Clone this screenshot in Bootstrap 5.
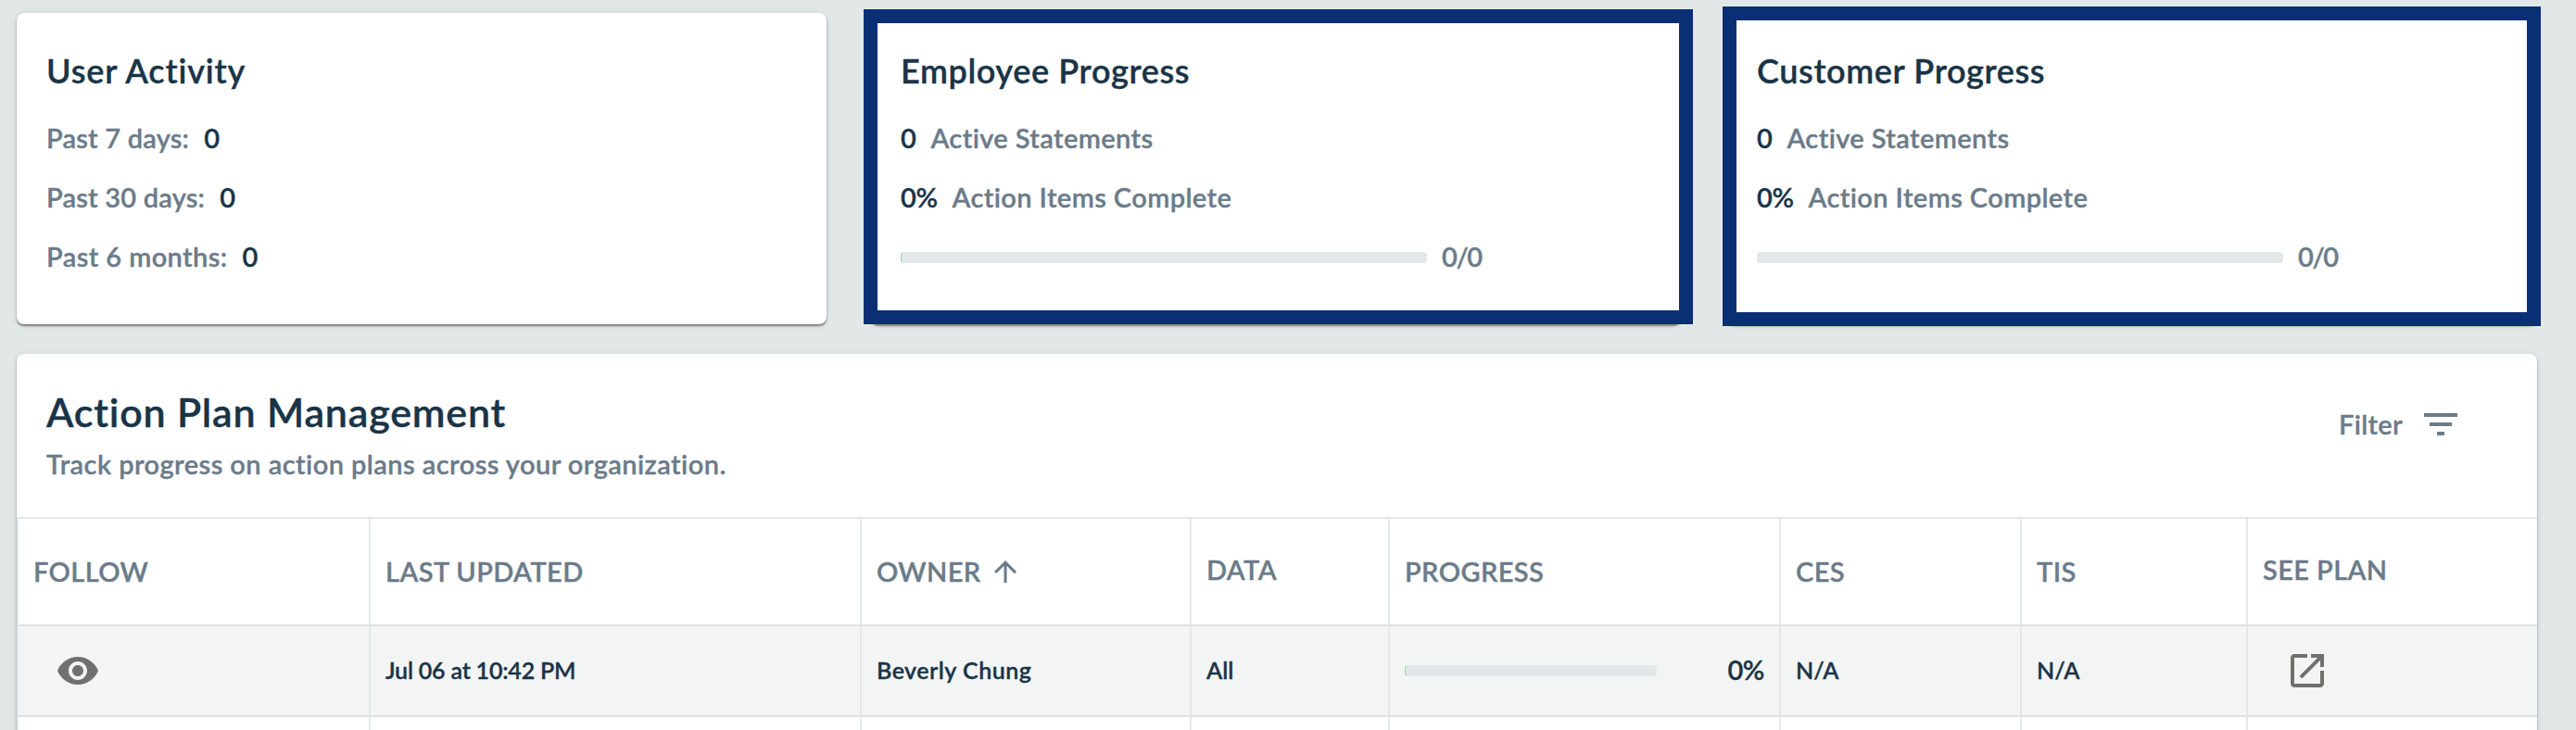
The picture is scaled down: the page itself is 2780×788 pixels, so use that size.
<!DOCTYPE html>
<html lang="en">
<head>
<meta charset="utf-8">
<meta name="viewport" content="width=device-width, initial-scale=1">
<title>Action Plan Management</title>
<link href="https://cdn.jsdelivr.net/npm/bootstrap@5.3.0/dist/css/bootstrap.min.css" rel="stylesheet">
<style>
:root{--ink:#1a3447;--muted:#6b7b89;--line:#e2e8e8}
html,body{height:788px;overflow:hidden}
body{background:#e2e8e8;font-family:Lato,"Liberation Sans",sans-serif;font-weight:600;color:var(--ink);line-height:1.2;-webkit-text-stroke:.35px currentColor}
.dash{height:788px;padding:14px 42px 0 18px;overflow:hidden}
.stats{display:grid;grid-template-columns:repeat(3,874px);column-gap:48px;height:336px}
.panel{background:#fff;border:0;border-radius:8px;box-shadow:0 2px 2px rgba(0,0,0,.42),0 1px 6px rgba(0,0,0,.12)}
.stats .panel{padding:30px 32px 0}
/* selection frames drawn around the two progress cards */
.framed{position:relative}
.framed::after{content:"";position:absolute;border:15px solid #0b2f74}
.frame-emp::after{left:-8px;top:-4px;width:895px;height:340px}
.frame-cus{left:2px}
.frame-cus::after{left:-5px;top:-7px;width:883px;height:345px}
.ttl{font-size:36px;line-height:64px;font-weight:600;letter-spacing:.63px;margin:0 0 9px}
.ttl.wide{letter-spacing:.85px}
.ln{font-size:29px;height:64px;color:var(--muted);letter-spacing:.4px;gap:16px}
.days span{letter-spacing:.2px}
.ln b,.pct{font-weight:600;color:var(--ink);letter-spacing:-.4px}
.ln .tally{letter-spacing:-1.4px}
.track{width:568px;height:12px;border-radius:4px;background:#e2e8e8;position:relative;top:1px;flex:none}
.track.started{border-left:1px solid #9ccf9c}
.mgmt{margin-top:32px;height:420px}
.mhead{height:176px;padding:30px 80px 0 32px}
.h-main{font-size:43px;line-height:66px;font-weight:600;letter-spacing:.8px;margin:0 0 1px}
.sub{font-size:29px;line-height:44px;letter-spacing:.43px;color:var(--muted)}
.filter{font-size:29px;color:var(--muted);gap:17px;height:48px;margin-top:22px}
.filter span{letter-spacing:.3px}
.gridrow{display:grid;grid-template-columns:380px 530px 356px 214px 422px 260px 244px 314px;position:relative}
.gridrow>div{border-left:2px solid var(--line);padding:0 16px;display:flex;align-items:center}
.hrow{height:118px;border-top:2px solid var(--line)}
.hrow>div{font-size:29px;color:var(--muted);letter-spacing:.4px;border-bottom:2px solid #dde1e1}
.hrow>.raise{padding-bottom:4px}
.drow{height:98px;background:#f3f5f4}
.drow>div{font-size:25px;border-bottom:2px solid #dde1e1;padding-bottom:3px}
.drow svg{fill:#6f716f;position:relative;top:1px}
.drow>.date{letter-spacing:-.2px}
.drow>.owner{letter-spacing:.5px}
.pct{font-size:29px;position:relative;top:1px}
svg{display:block;flex:none}
</style>
</head>
<body>
<main class="dash">
  <section class="stats">
    <div class="panel card">
      <h2 class="ttl wide">User Activity</h2>
      <div class="ln days d-flex align-items-center"><span>Past 7 days:</span><b>0</b></div>
      <div class="ln days d-flex align-items-center"><span>Past 30 days:</span><b>0</b></div>
      <div class="ln d-flex align-items-center"><span>Past 6 months:</span><b>0</b></div>
    </div>
    <div class="panel card framed frame-emp">
      <h2 class="ttl">Employee Progress</h2>
      <div class="ln d-flex align-items-center"><b>0</b><span>Active Statements</span></div>
      <div class="ln d-flex align-items-center"><b>0%</b><span>Action Items Complete</span></div>
      <div class="ln d-flex align-items-center"><div class="track started"></div><span class="tally">0/0</span></div>
    </div>
    <div class="panel card framed frame-cus">
      <h2 class="ttl">Customer Progress</h2>
      <div class="ln d-flex align-items-center"><b>0</b><span>Active Statements</span></div>
      <div class="ln d-flex align-items-center"><b>0%</b><span>Action Items Complete</span></div>
      <div class="ln d-flex align-items-center"><div class="track"></div><span class="tally">0/0</span></div>
    </div>
  </section>
  <section class="panel mgmt">
    <div class="mhead d-flex justify-content-between align-items-start">
      <div>
        <h1 class="h-main">Action Plan Management</h1>
        <div class="sub">Track progress on action plans across your organization.</div>
      </div>
      <div class="filter d-flex align-items-center"><span>Filter</span>
        <svg width="48" height="48" viewBox="0 0 24 24" fill="currentColor"><path d="M10 18h4v-2h-4v2zM3 6v2h18V6H3zm3 7h12v-2H6v2z"/></svg>
      </div>
    </div>
    <div class="gridrow hrow">
      <div>FOLLOW</div><div>LAST UPDATED</div>
      <div>OWNER<svg class="ms-2" width="36" height="36" viewBox="0 0 24 24" fill="currentColor"><path d="M4 12l1.41 1.41L11 7.83V20h2V7.83l5.58 5.59L20 12l-8-8-8 8z"/></svg></div>
      <div class="raise">DATA</div><div>PROGRESS</div><div>CES</div><div>TIS</div><div class="raise">SEE PLAN</div>
    </div>
    <div class="gridrow drow">
      <div class="ps-4"><svg class="ms-3" width="48" height="48" viewBox="0 0 24 24"><path d="M12 4.5C7 4.5 2.73 7.61 1 12c1.73 4.39 6 7.5 11 7.5s9.27-3.11 11-7.5c-1.73-4.39-6-7.5-11-7.5zM12 17c-2.76 0-5-2.24-5-5s2.24-5 5-5 5 2.24 5 5-2.24 5-5 5zm0-8c-1.66 0-3 1.34-3 3s1.34 3 3 3 3-1.34 3-3-1.34-3-3-3z"/></svg></div>
      <div class="date">Jul 06 at 10:42 PM</div>
      <div class="owner">Beverly Chung</div>
      <div>All</div>
      <div class="justify-content-between"><span class="track started" style="width:272px"></span><span class="pct">0%</span></div>
      <div>N/A</div><div>N/A</div>
      <div class="ps-4"><svg class="ms-3" width="48" height="48" viewBox="0 0 24 24"><path d="M19 19H5V5h7V3H5c-1.11 0-2 .9-2 2v14c0 1.1.89 2 2 2h14c1.1 0 2-.9 2-2v-7h-2v7zM14 3v2h3.59l-9.83 9.83 1.41 1.41L19 6.41V10h2V3h-7z"/></svg></div>
    </div>
    <div class="gridrow" style="height:28px"><div></div><div></div><div></div><div></div><div></div><div></div><div></div><div></div></div>
  </section>
</main>
<script src="https://cdn.jsdelivr.net/npm/bootstrap@5.3.0/dist/js/bootstrap.bundle.min.js"></script>
</body>
</html>
